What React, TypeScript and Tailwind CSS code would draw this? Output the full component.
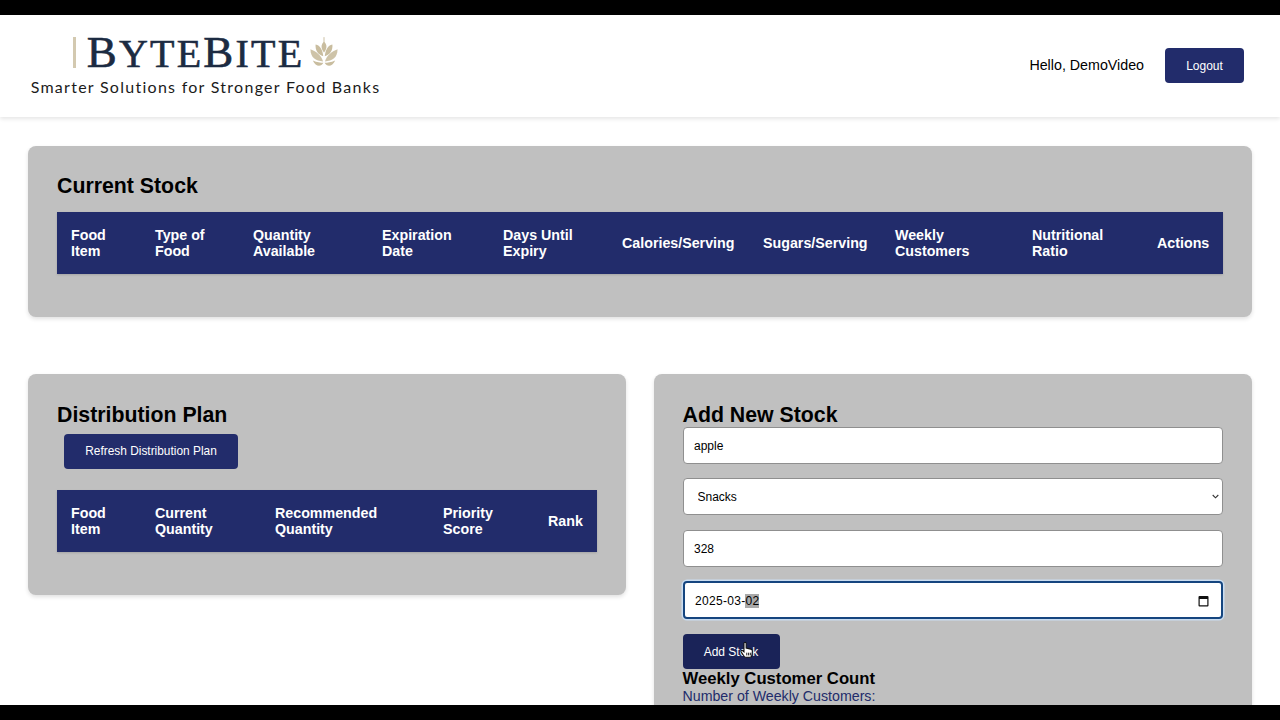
import React from "react";

const navy = "bg-[#222c6b]";

function Wheat() {
  return (
    <svg width="28" height="32" viewBox="0 0 30 34" className="ml-[6px]" fill="#c9bd9f">
      <rect x="14.5" y="0" width="1" height="9" />
      <path d="M15 5 C18.5 8 18.5 12 15 16.5 C11.5 12 11.5 8 15 5Z" />
      <path d="M6 8 C11 9 13.5 14 14.2 20.5 C8.5 19 5.5 14.5 6 8Z" />
      <path d="M24 8 C19 9 16.5 14 15.8 20.5 C21.5 19 24.5 14.5 24 8Z" />
      <path d="M.5 13 C.5 22 6 25.5 14 26 C12 19.5 7 15.5 .5 13Z" opacity="0.9" />
      <path d="M29.5 13 C29.5 22 24 25.5 16 26 C18 19.5 23 15.5 29.5 13Z" opacity="0.9" />
      <path d="M3 25 C8 27 11 27.5 14.3 27.5 C12 32 6 32 3 25Z" />
      <path d="M27 25 C22 27 19 27.5 15.7 27.5 C18 32 24 32 27 25Z" />
    </svg>
  );
}

function HeadCell({ lines, width }: { lines: string[]; width: number }) {
  return (
    <div className="flex items-center pl-[14px] text-[14.25px] font-bold leading-[16px] text-white" style={{ width }}>
      <span>
        {lines.map((l) => (
          <span key={l} className="block whitespace-nowrap">{l}</span>
        ))}
      </span>
    </div>
  );
}

function HeadRow({ cols }: { cols: [string[], number][] }) {
  return (
    <div className={`flex h-[62px] ${navy} shadow-[0_1px_2px_rgba(0,0,0,0.15)]`}>
      {cols.map(([lines, w]) => (
        <HeadCell key={lines.join()} lines={lines} width={w} />
      ))}
    </div>
  );
}

const stockCols: [string[], number][] = [
  [["Food", "Item"], 84],
  [["Type of", "Food"], 98],
  [["Quantity", "Available"], 129],
  [["Expiration", "Date"], 121],
  [["Days Until", "Expiry"], 119],
  [["Calories/Serving"], 141],
  [["Sugars/Serving"], 132],
  [["Weekly", "Customers"], 137],
  [["Nutritional", "Ratio"], 125],
  [["Actions"], 80],
];

const planCols: [string[], number][] = [
  [["Food", "Item"], 84],
  [["Current", "Quantity"], 120],
  [["Recommended", "Quantity"], 168],
  [["Priority", "Score"], 105],
  [["Rank"], 63],
];

const card = "rounded-[8px] bg-[#c0c0c0] shadow-[0_2px_4px_rgba(0,0,0,0.12)]";
const field = "block w-full h-[37px] rounded-[4px] border border-[#8f8f8f] bg-white text-[12px] text-black outline-none";

export default function App() {
  return (
    <div className="flex h-[720px] w-[1280px] flex-col overflow-hidden bg-white font-['Liberation_Sans',Arial,sans-serif] text-black">
      <div className="h-[15px] shrink-0 bg-black" />
      <main className="min-h-0 flex-1 overflow-hidden bg-white">
        <header className="flex h-[102px] items-center justify-between bg-white pl-[31px] pr-[36px] shadow-[0_2px_4px_rgba(0,0,0,0.1)]">
          <div className="-mt-[2px] flex w-[349px] flex-col items-center">
            <div className="flex h-[38px] items-center">
              <div className="mr-[11px] h-[31px] w-[3px] bg-[#d3c9b0]" />
              <span className="whitespace-nowrap font-['Liberation_Serif',serif] text-[40px] uppercase leading-[38px] tracking-[2.2px] text-[#1c2b42] [-webkit-text-stroke:0.6px_#1c2b42]">
                <span className="text-[45px]">B</span>yte<span className="text-[45px]">B</span>ite
              </span>
              <Wheat />
            </div>
            <div className="mt-[5px] whitespace-nowrap font-['Lato',sans-serif] text-[16px] leading-[20px] tracking-[1.27px] text-[#1b1b1b]">
              Smarter Solutions for Stronger Food Banks
            </div>
          </div>
          <div className="flex items-center">
            <span className="mr-[21px] text-[14.25px]">Hello, DemoVideo</span>
            <button className={`mb-[1px] h-[35px] w-[79px] rounded-[4px] ${navy} text-[12px] text-white`}>Logout</button>
          </div>
        </header>

        <div className="px-[28px] pt-[29px]">
          <section className={`${card} h-[171px] px-[29px] pt-[28px]`}>
            <h2 className="mb-[14px] text-[21.3px] font-bold leading-[24px]">Current Stock</h2>
            <HeadRow cols={stockCols} />
          </section>

          <div className="mt-[57px] grid grid-cols-2 items-start gap-[28px]">
            <section className={`${card} h-[221px] px-[29px] pt-[29px]`}>
              <h2 className="text-[21.3px] font-bold leading-[24px]">Distribution Plan</h2>
              <button className={`ml-[7px] mt-[7px] block h-[35px] w-[174px] rounded-[4px] ${navy} text-[11.9px] text-white`}>
                Refresh Distribution Plan
              </button>
              <div className="mt-[21px]">
                <HeadRow cols={planCols} />
              </div>
            </section>

            <section className={`${card} h-[400px] pl-[28.5px] pr-[29px] pt-[28.5px]`}>
              <h2 className="text-[21.3px] font-bold leading-[24px]">Add New Stock</h2>
              <input readOnly value="apple" className={`${field} px-[10.5px] pt-[1px]`} />
              <div className="relative mt-[14.67px]">
                <select defaultValue="Snacks" className={`${field} appearance-none pl-[14px] pt-[1px]`}>
                  <option>Snacks</option>
                </select>
                <svg className="pointer-events-none absolute right-[4px] top-[16px]" width="7" height="5" viewBox="0 0 7 5" fill="none" stroke="#333" strokeWidth="1.1">
                  <path d="M.7 1 L3.5 3.8 L6.3 1" />
                </svg>
              </div>
              <input readOnly value="328" className={`${field} mt-[14.67px] px-[10.5px] pt-[1px]`} />
              <div className="mt-[14.67px] flex h-[38px] w-full items-center justify-between rounded-[4px] border-2 border-[#15457f] bg-white pl-[10.5px] pr-[12px] pt-[1px] text-[12px] shadow-[0_0_0_1.5px_#c9dcf0]">
                <span className="tracking-[0.3px]">
                  2025-03-<span className="bg-[#a9a9a9]">02</span>
                </span>
                <svg width="11" height="12" viewBox="0 0 11 12">
                  <path fillRule="evenodd" fill="#111" d="M1.5 1H9.5A1 1 0 0 1 10.5 2V10.5A1 1 0 0 1 9.5 11.5H1.5A1 1 0 0 1 .5 10.5V2A1 1 0 0 1 1.5 1ZM1.7 4V10.3H9.3V4Z" />
                </svg>
              </div>
              <div className="relative mt-[14.5px] h-[35px] w-[97px]">
                <button className="h-full w-full rounded-[4px] bg-[#1a2358] pt-[1px] text-[12px] text-white">Add Stock</button>
                <svg className="absolute left-[57px] top-[7px]" width="14" height="18" viewBox="0 0 13 16">
                  <path d="M4 1.2C4.8 .6 5.7 1 5.7 2V6.2L10 7.2C11 7.5 11.6 8.2 11.5 9.2L11 13C10.9 14 10.3 14.8 9.3 14.8H5.6C4.9 14.8 4.4 14.5 4 14L1 9.7C.6 9 1.5 8 2.3 8.6L3.7 9.8V2C3.7 1.7 3.8 1.4 4 1.2Z" fill="#fff" stroke="#111" strokeWidth="1" />
                  <path d="M6.3 10.5V13M8 10.5V13M9.6 10.5V13" stroke="#111" strokeWidth="0.9" />
                </svg>
              </div>
              <h3 className="mt-[1.5px] text-[16.7px] font-bold leading-[18px]">Weekly Customer Count</h3>
              <label className="block h-[16px] whitespace-nowrap text-[14.2px] leading-[17px] text-[#222c6b]">Number of Weekly Customers:</label>
            </section>
          </div>
        </div>
      </main>
      <div className="h-[15px] shrink-0 bg-black" />
    </div>
  );
}
